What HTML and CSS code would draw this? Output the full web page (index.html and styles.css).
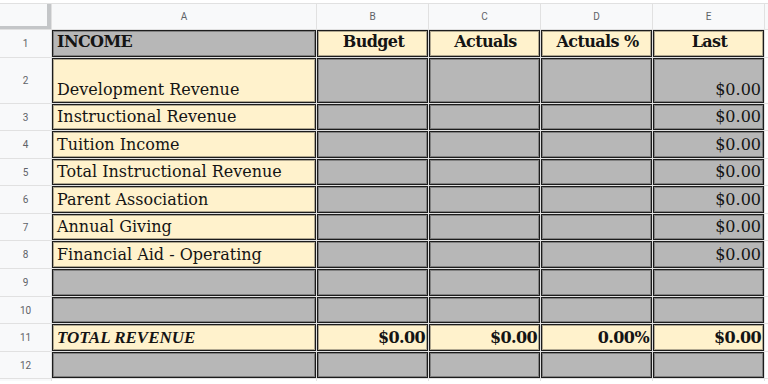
FILE: index.html
```html
<!DOCTYPE html>
<html>
<head>
<meta charset="utf-8">
<link rel="stylesheet" href="styles.css">
</head>
<body>
<div class="sheet">
  <div class="corner"></div>
  <div class="colhead">A</div>
  <div class="colhead">B</div>
  <div class="colhead">C</div>
  <div class="colhead">D</div>
  <div class="colhead">E</div>
  <div class="colhead"></div>

  <div class="rowhead">1</div>
  <div class="cell gray bold hdr">INCOME</div>
  <div class="cell beige bold hdr center">Budget</div>
  <div class="cell beige bold hdr center">Actuals</div>
  <div class="cell beige bold hdr center">Actuals %</div>
  <div class="cell beige bold hdr center">Last</div>
  <div class="blank"></div>

  <div class="rowhead">2</div>
  <div class="cell beige">Development Revenue</div>
  <div class="cell gray"></div>
  <div class="cell gray"></div>
  <div class="cell gray"></div>
  <div class="cell gray right">$0.00</div>
  <div class="blank"></div>

  <div class="rowhead">3</div>
  <div class="cell beige">Instructional Revenue</div>
  <div class="cell gray"></div>
  <div class="cell gray"></div>
  <div class="cell gray"></div>
  <div class="cell gray right">$0.00</div>
  <div class="blank"></div>

  <div class="rowhead">4</div>
  <div class="cell beige">Tuition Income</div>
  <div class="cell gray"></div>
  <div class="cell gray"></div>
  <div class="cell gray"></div>
  <div class="cell gray right">$0.00</div>
  <div class="blank"></div>

  <div class="rowhead">5</div>
  <div class="cell beige">Total Instructional Revenue</div>
  <div class="cell gray"></div>
  <div class="cell gray"></div>
  <div class="cell gray"></div>
  <div class="cell gray right">$0.00</div>
  <div class="blank"></div>

  <div class="rowhead">6</div>
  <div class="cell beige">Parent Association</div>
  <div class="cell gray"></div>
  <div class="cell gray"></div>
  <div class="cell gray"></div>
  <div class="cell gray right">$0.00</div>
  <div class="blank"></div>

  <div class="rowhead">7</div>
  <div class="cell beige">Annual Giving</div>
  <div class="cell gray"></div>
  <div class="cell gray"></div>
  <div class="cell gray"></div>
  <div class="cell gray right">$0.00</div>
  <div class="blank"></div>

  <div class="rowhead">8</div>
  <div class="cell beige">Financial Aid - Operating</div>
  <div class="cell gray"></div>
  <div class="cell gray"></div>
  <div class="cell gray"></div>
  <div class="cell gray right">$0.00</div>
  <div class="blank"></div>

  <div class="rowhead">9</div>
  <div class="cell gray"></div>
  <div class="cell gray"></div>
  <div class="cell gray"></div>
  <div class="cell gray"></div>
  <div class="cell gray"></div>
  <div class="blank"></div>

  <div class="rowhead">10</div>
  <div class="cell gray"></div>
  <div class="cell gray"></div>
  <div class="cell gray"></div>
  <div class="cell gray"></div>
  <div class="cell gray"></div>
  <div class="blank"></div>

  <div class="rowhead">11</div>
  <div class="cell beige bold italic">TOTAL REVENUE</div>
  <div class="cell beige bold right">$0.00</div>
  <div class="cell beige bold right">$0.00</div>
  <div class="cell beige bold right">0.00%</div>
  <div class="cell beige bold right">$0.00</div>
  <div class="blank"></div>

  <div class="rowhead">12</div>
  <div class="cell gray"></div>
  <div class="cell gray"></div>
  <div class="cell gray"></div>
  <div class="cell gray"></div>
  <div class="cell gray"></div>
  <div class="blank"></div>

  <div class="rowhead"></div>
  <div class="blank"></div>
  <div class="blank"></div>
  <div class="blank"></div>
  <div class="blank"></div>
  <div class="blank"></div>
  <div class="blank"></div>
</div>
</body>
</html>
```

FILE: styles.css
```css
html, body {
  margin: 0;
  padding: 0;
  background: #ffffff;
  overflow: hidden;
}

.sheet {
  margin-top: 3px;
  border-top: 1px solid #e1e1e1;
  display: grid;
  grid-template-columns: 51px 264px 111px 111px 111px 111px 1fr;
  grid-template-rows: 25px 27px 45px 26px 27px 26px 27px 26px 27px 27px 26px 27px 26px 2px;
  gap: 1px;
  background: #e1e1e1;
  width: 768px;
}

.corner {
  background: #f8f9fa;
  border-right: 4px solid #c4c6c8;
  border-bottom: 3px solid #c4c6c8;
  box-sizing: border-box;
}

.colhead {
  background: #f8f9fa;
  color: #5f6368;
  font-family: Roboto, "Liberation Sans", sans-serif;
  font-size: 10px;
  display: flex;
  align-items: center;
  justify-content: center;
}

.rowhead {
  background: #f8f9fa;
  color: #5f6368;
  font-family: Roboto, "Liberation Sans", sans-serif;
  font-size: 10px;
  display: flex;
  align-items: center;
  justify-content: center;
}

.blank {
  background: #ffffff;
}

.cell {
  box-sizing: border-box;
  border: 1px solid #1c1c1c;
  box-shadow: inset 0 0 0 1px rgba(30, 30, 30, 0.35);
  font-family: "DejaVu Serif", serif;
  font-size: 16px;
  line-height: 18px;
  color: #141414;
  display: flex;
  align-items: flex-end;
  padding: 0 2px 3px 4px;
  white-space: nowrap;
  overflow: hidden;
}

.gray { background: #b7b7b7; }
.beige { background: #fff2cc; }
.bold { font-weight: bold; letter-spacing: -0.6px; }
.italic {
  font-family: "Liberation Serif", serif;
  font-style: italic;
  font-size: 17px;
  letter-spacing: 0;
}
.center { justify-content: center; }
.right { justify-content: flex-end; }
.hdr { padding-bottom: 5px; }
```
